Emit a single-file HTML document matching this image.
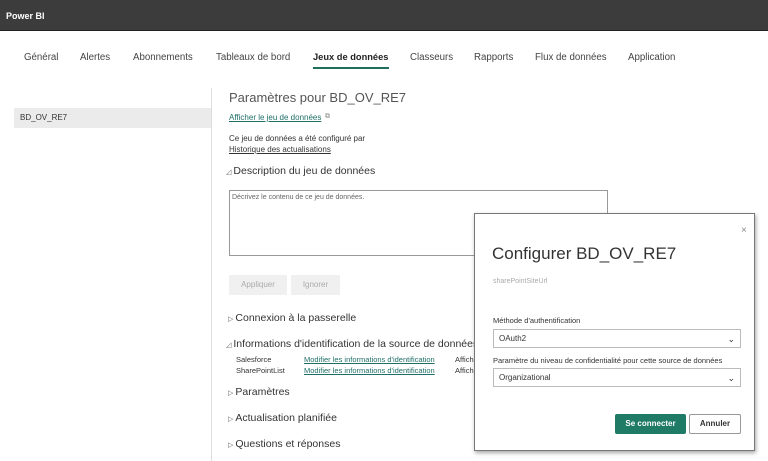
<!DOCTYPE html>
<html><head><meta charset="utf-8"><style>
*{margin:0;padding:0;box-sizing:border-box}
body{width:768px;height:461px;overflow:hidden;background:#fff;font-family:"Liberation Sans",sans-serif;color:#333;position:relative}
.a{position:absolute;white-space:nowrap}
.top{left:0;top:0;width:768px;height:31px;background:#3c3c3c;border-bottom:1px solid #222}
.tab{top:52px;font-size:9.7px;color:#444}
.lk{color:#1f6f68;text-decoration:underline}
.sec{font-size:10.5px;color:#333}
.tri{font-size:7px;color:#666;margin-right:2px}
.sel{border:1px solid #bbb;background:#fff;font-size:8px;padding-left:5px;line-height:18px;height:19px}
</style></head><body>
<div class="a top"></div>
<div class="a" style="left:6px;top:11px;color:#fff;font-size:9px;font-weight:bold">Power BI</div>
<div class="a tab" style="left:24px">Général</div>
<div class="a tab" style="left:80px">Alertes</div>
<div class="a tab" style="left:133px">Abonnements</div>
<div class="a tab" style="left:216px">Tableaux de bord</div>
<div class="a tab" style="left:313px;font-weight:bold;color:#222;font-size:9.3px">Jeux de données</div>
<div class="a" style="left:313px;top:67px;width:76px;height:2px;background:#1f6f5f"></div>
<div class="a tab" style="left:410px">Classeurs</div>
<div class="a tab" style="left:474px">Rapports</div>
<div class="a tab" style="left:535px">Flux de données</div>
<div class="a tab" style="left:628px">Application</div>
<div class="a" style="left:14px;top:108px;width:197px;height:20px;background:#ebebeb"></div>
<div class="a" style="left:20px;top:113px;font-size:8px">BD_OV_RE7</div>
<div class="a" style="left:211px;top:88px;width:1px;height:373px;background:#ddd"></div>
<div class="a" style="left:229px;top:90px;font-size:13px;color:#555">Paramètres pour BD_OV_RE7</div>
<div class="a lk" style="left:229px;top:113px;font-size:8px">Afficher le jeu de données</div>
<div class="a" style="left:325px;top:113px;font-size:7px;color:#888">⧉</div>
<div class="a" style="left:229px;top:134px;font-size:8px">Ce jeu de données a été configuré par</div>
<div class="a" style="left:229px;top:145px;font-size:8px;text-decoration:underline">Historique des actualisations</div>
<div class="a sec" style="left:226px;top:165px"><span class="tri">◿</span>Description du jeu de données</div>
<div class="a" style="left:229px;top:190px;width:379px;height:66px;border:1px solid #999"></div>
<div class="a" style="left:232px;top:194px;font-size:7px;color:#666">Décrivez le contenu de ce jeu de données.</div>
<div class="a" style="left:229px;top:275px;width:58px;height:20px;background:#f0f0f0;color:#aaa;font-size:8px;text-align:center;line-height:20px">Appliquer</div>
<div class="a" style="left:291px;top:275px;width:49px;height:20px;background:#f0f0f0;color:#aaa;font-size:8px;text-align:center;line-height:20px">Ignorer</div>
<div class="a sec" style="left:228px;top:312px"><span class="tri">▷</span>Connexion à la passerelle</div>
<div class="a sec" style="left:226px;top:338px"><span class="tri">◿</span>Informations d'identification de la source de données</div>
<div class="a" style="left:236px;top:355px;font-size:7.5px">Salesforce</div>
<div class="a" style="left:236px;top:366px;font-size:7.5px">SharePointList</div>
<div class="a lk" style="left:304px;top:355px;font-size:7.5px">Modifier les informations d'identification</div>
<div class="a lk" style="left:304px;top:366px;font-size:7.5px">Modifier les informations d'identification</div>
<div class="a" style="left:455px;top:355px;font-size:7.5px">Affich</div>
<div class="a" style="left:455px;top:366px;font-size:7.5px">Affich</div>
<div class="a sec" style="left:228px;top:386px"><span class="tri">▷</span>Paramètres</div>
<div class="a sec" style="left:228px;top:412px"><span class="tri">▷</span>Actualisation planifiée</div>
<div class="a sec" style="left:228px;top:438px"><span class="tri">▷</span>Questions et réponses</div>

<div class="a" style="left:474px;top:213px;width:281px;height:238px;background:#fff;border:1px solid #777;box-shadow:1px 2px 4px rgba(0,0,0,.35)"></div>
<div class="a" style="left:741px;top:225px;font-size:10px;color:#888">×</div>
<div class="a" style="left:492px;top:244px;font-size:17px;color:#333">Configurer BD_OV_RE7</div>
<div class="a" style="left:493px;top:278px;font-size:7px;color:#aaa">sharePointSiteUrl</div>
<div class="a" style="left:493px;top:316px;font-size:7.5px">Méthode d'authentification</div>
<div class="a sel" style="left:493px;top:329px;width:248px">OAuth2<span style="position:absolute;right:5px;font-size:9px">⌄</span></div>
<div class="a" style="left:493px;top:356px;font-size:7.5px">Paramètre du niveau de confidentialité pour cette source de données</div>
<div class="a sel" style="left:493px;top:368px;width:248px">Organizational<span style="position:absolute;right:5px;font-size:9px">⌄</span></div>
<div class="a" style="left:615px;top:414px;width:71px;height:20px;background:#1f7a66;color:#fff;font-size:8px;font-weight:bold;text-align:center;line-height:20px;border-radius:2px">Se connecter</div>
<div class="a" style="left:689px;top:414px;width:52px;height:20px;border:1px solid #999;font-size:8px;font-weight:bold;text-align:center;line-height:18px;border-radius:2px">Annuler</div>
</body></html>
